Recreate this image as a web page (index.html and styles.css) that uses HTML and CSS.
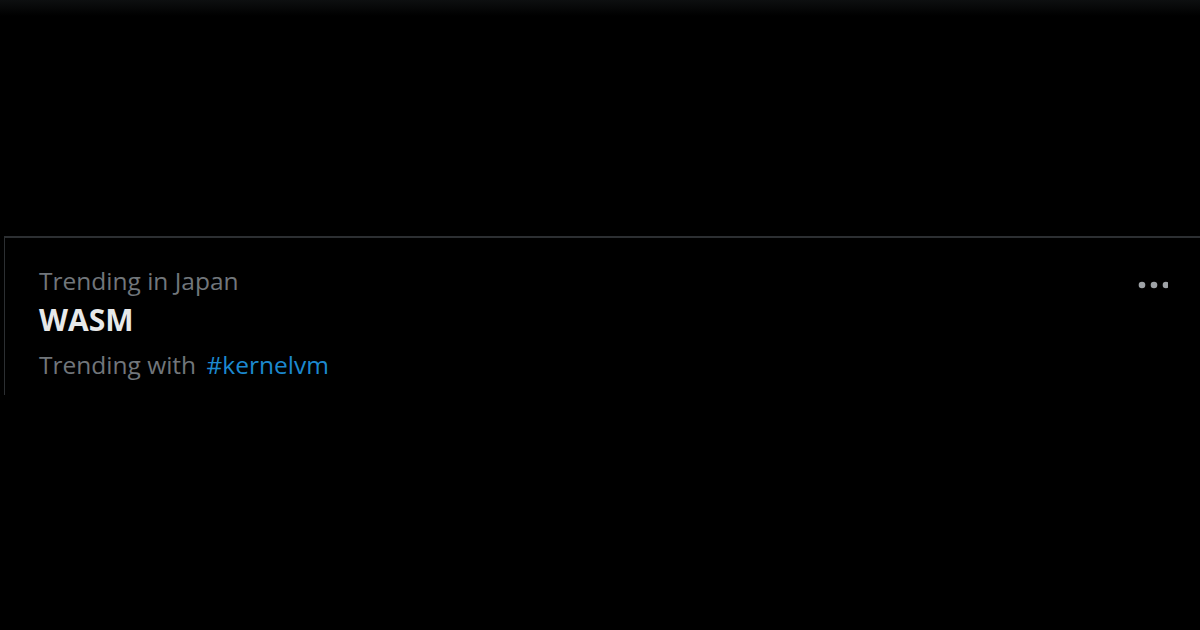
FILE: index.html
```html
<!DOCTYPE html>
<html lang="en">
<head>
    <meta charset="UTF-8">
    <meta name="viewport" content="width=device-width, initial-scale=1.0">
    <title>Trending</title>
    <link rel="stylesheet" href="styles.css">
</head>
<body>
    <div class="topbar"></div>
    <div class="trend">
        <div class="trend-text">
            <div class="trend-context">Trending in Japan</div>
            <div class="trend-name">WASM</div>
            <div class="trend-with">Trending with <a href="#" class="hashtag">#kernelvm</a></div>
        </div>
        <button class="more" aria-label="More">
            <svg width="30" height="10" viewBox="0 0 30 10">
                <circle cx="4" cy="5" r="3.3" fill="#9ea2a6"/>
                <circle cx="16" cy="5" r="3.3" fill="#9ea2a6"/>
                <circle cx="28" cy="5" r="3.3" fill="#9ea2a6"/>
            </svg>
        </button>
    </div>
</body>
</html>
```

FILE: styles.css
```css
body {
    margin: 0;
    background-color: #000;
    font-family: "Open Sans", "Noto Sans", sans-serif;
    height: 630px;
    overflow: hidden;
}

.topbar {
    height: 16px;
    background: linear-gradient(#0d0f10, #000);
}

.trend {
    margin-top: 220px;
    margin-left: 4px;
    height: 157px;
    border-top: 2px solid #2c2f32;
    border-left: 1px solid #2c2f32;
    display: flex;
    justify-content: space-between;
    padding: 0 32px 0 34px;
}

.trend-text {
    padding-top: 22px;
}

.trend-context,
.trend-with {
    color: #71767b;
    font-size: 24.5px;
    line-height: 42px;
}

.trend-name {
    color: #e7e9ea;
    font-size: 30px;
    font-weight: 700;
    line-height: 42px;
    margin: -3px 0 3px;
}

.hashtag {
    color: #1c89d0;
    text-decoration: none;
    margin-left: 4px;
}

.more {
    background: none;
    border: 0;
    padding: 0;
    margin-top: 42px;
    height: 10px;
    display: flex;
}
```
